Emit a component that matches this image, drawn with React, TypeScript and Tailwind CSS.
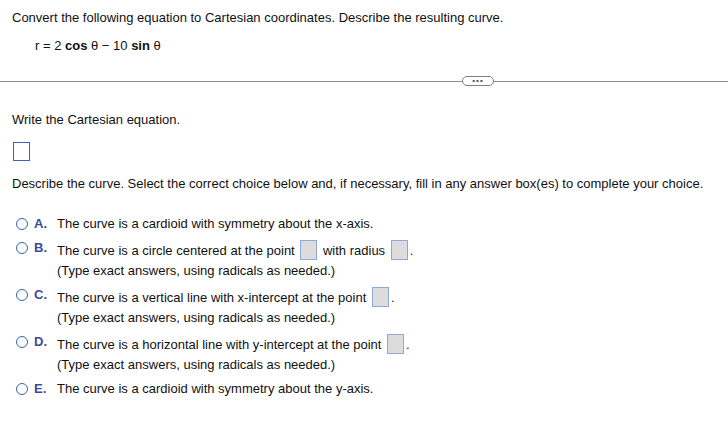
import React from "react";

function Box() {
  return <span className="mx-[2px] inline-block h-[20px] w-[17px] border border-[#8fa8dc] bg-[#dcdcdc] align-[-5px]" />;
}

function Choice({ letter, children, note }: { letter: string; children: React.ReactNode; note?: boolean }) {
  return (
    <div className="flex">
      <span className="mt-[2px] h-[12px] w-[12px] shrink-0 rounded-full border border-[#3a5fb4]" />
      <span className="ml-[6px] w-[17px] shrink-0 font-bold text-[#3a4b9a]">{letter}.</span>
      <div className="ml-[6px]">
        <div>{children}</div>
        {note ? <div className="mt-[3px]">(Type exact answers, using radicals as needed.)</div> : null}
      </div>
    </div>
  );
}

export default function App() {
  return (
    <div className="h-[433px] w-[728px] bg-white text-[13px] leading-[15px] text-[#111]" style={{ fontFamily: '"Liberation Sans", Arial, sans-serif' }}>
      <div className="px-[12px] pt-[10px]">
        <p>Convert the following equation to Cartesian coordinates. Describe the resulting curve.</p>
        <p className="mt-[13px] pl-[23px]">
          r = 2 <b>cos</b> θ − 10 <b>sin</b> θ
        </p>
      </div>

      <div className="relative mt-[28px] h-px bg-[#8a8f96]">
        <span className="absolute left-[462px] top-[-5px] flex h-[10px] w-[32px] items-center justify-center rounded-full border border-[#7a808a] bg-white text-[8px] leading-none font-bold tracking-[1px] text-[#555]">
          •••
        </span>
      </div>

      <div className="px-[12px]">
        <p className="mt-[30px]">Write the Cartesian equation.</p>
        <div className="ml-[1px] mt-[15px] h-[19px] w-[17px] border border-[#3a62c4]" />
        <p className="mt-[15px]">Describe the curve. Select the correct choice below and, if necessary, fill in any answer box(es) to complete your choice.</p>

        <div className="mt-[25px] ml-[4px] flex flex-col gap-[9px]">
          <Choice letter="A">The curve is a cardioid with symmetry about the x-axis.</Choice>
          <Choice letter="B" note>
            The curve is a circle centered at the point <Box /> with radius <Box />.
          </Choice>
          <Choice letter="C" note>
            The curve is a vertical line with x-intercept at the point <Box />.
          </Choice>
          <Choice letter="D" note>
            The curve is a horizontal line with y-intercept at the point <Box />.
          </Choice>
          <Choice letter="E">The curve is a cardioid with symmetry about the y-axis.</Choice>
        </div>
      </div>
    </div>
  );
}
